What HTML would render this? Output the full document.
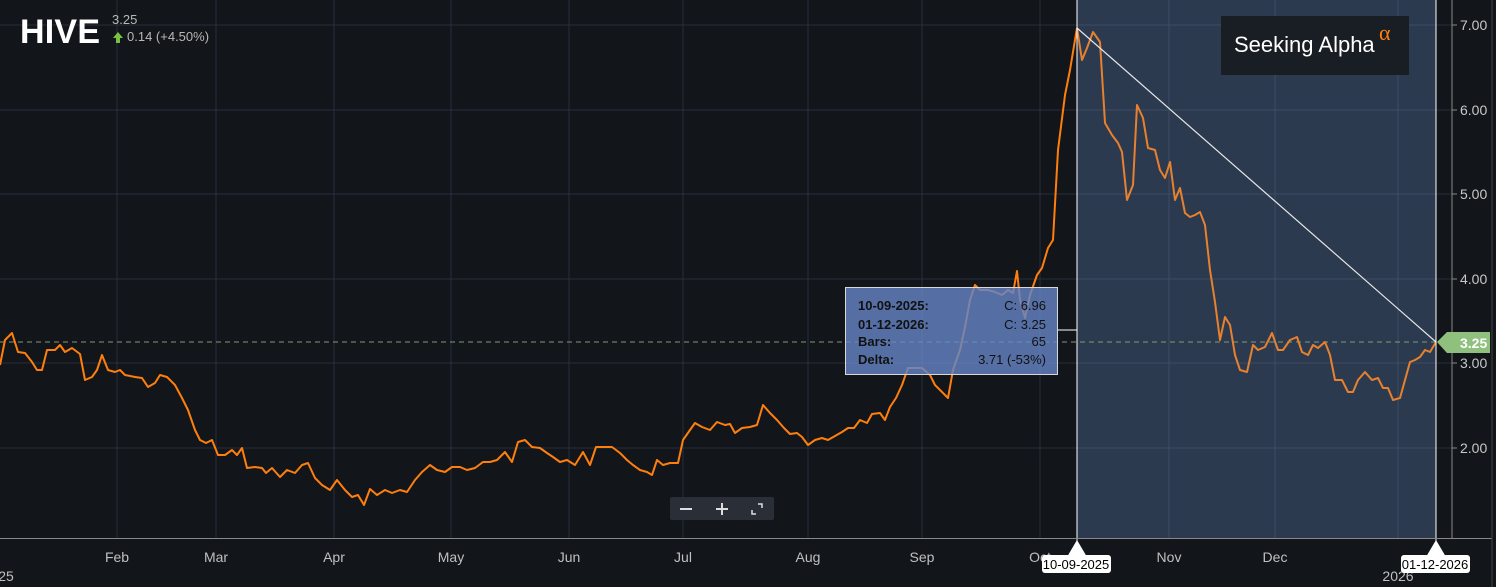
<!DOCTYPE html>
<html><head><meta charset="utf-8"><style>
body{margin:0;background:#121519;width:1496px;height:587px;overflow:hidden;font-family:"Liberation Sans",sans-serif}
</style></head><body>
<svg width="1496" height="587" style="position:absolute;left:0;top:0" font-family="Liberation Sans, sans-serif">
<rect width="1496" height="587" fill="#121519"/>
<rect x="1077" y="0" width="359" height="538" fill="#2c3a4f"/>
<g stroke="#25303d" stroke-width="1">
<line x1="0" y1="25" x2="1452" y2="25"/><line x1="0" y1="110" x2="1452" y2="110"/><line x1="0" y1="194" x2="1452" y2="194"/><line x1="0" y1="279" x2="1452" y2="279"/><line x1="0" y1="363" x2="1452" y2="363"/><line x1="0" y1="448" x2="1452" y2="448"/>
<line x1="117" y1="0" x2="117" y2="538"/><line x1="216" y1="0" x2="216" y2="538"/><line x1="334" y1="0" x2="334" y2="538"/><line x1="451" y1="0" x2="451" y2="538"/><line x1="569" y1="0" x2="569" y2="538"/><line x1="683" y1="0" x2="683" y2="538"/><line x1="808" y1="0" x2="808" y2="538"/><line x1="922" y1="0" x2="922" y2="538"/><line x1="1040" y1="0" x2="1040" y2="538"/>
</g>
<g stroke="#3b4c66"><line x1="1169" y1="0" x2="1169" y2="538"/><line x1="1275" y1="0" x2="1275" y2="538"/><line x1="1398" y1="0" x2="1398" y2="538"/><line x1="1077" y1="25" x2="1436" y2="25"/><line x1="1077" y1="110" x2="1436" y2="110"/><line x1="1077" y1="194" x2="1436" y2="194"/><line x1="1077" y1="279" x2="1436" y2="279"/><line x1="1077" y1="363" x2="1436" y2="363"/><line x1="1077" y1="448" x2="1436" y2="448"/></g>
<line x1="0" y1="342" x2="1440" y2="342" stroke="#7d9a78" stroke-dasharray="5,4"/>
<polyline fill="none" stroke="#ff7f0e" stroke-width="2" stroke-linejoin="round" points="0,365 5,340 12,333 18,352 25,353 32,362 37,370 42,370 47,350 55,350 60,345 65,352 72,348 80,354 85,380 92,377 97,370 102,355 108,370 115,372 120,370 125,375 135,377 142,378 148,387 155,383 160,375 167,377 175,385 182,398 188,410 195,430 200,440 206,443 212,440 218,455 225,455 232,450 237,455 242,448 247,468 255,467 262,468 266,473 272,468 280,477 287,470 295,473 302,465 308,463 315,478 322,485 330,490 337,480 345,490 352,497 358,495 364,505 370,489 377,495 385,490 392,493 400,490 407,492 415,480 422,472 430,465 437,470 445,472 452,467 460,467 467,470 475,468 483,462 490,462 497,460 505,452 512,462 518,442 525,440 532,447 540,448 547,453 553,457 560,462 567,460 575,465 583,452 590,465 596,447 603,447 612,447 620,453 627,460 633,465 640,470 647,472 652,475 657,460 663,465 670,463 678,463 683,440 690,430 695,423 702,427 710,430 717,422 725,425 730,424 735,433 742,428 750,427 757,425 763,405 770,413 777,420 784,428 790,434 797,433 802,437 808,445 815,440 822,438 828,440 835,436 842,432 848,428 854,428 860,420 867,423 872,414 880,413 885,420 890,407 896,398 902,385 908,368 915,368 922,368 930,375 935,385 942,392 948,398 953,370 960,350 965,327 970,300 975,285 980,290 988,290 995,292 1002,295 1008,290 1013,293 1017,271 1020,300 1025,318 1030,295 1037,275 1042,268 1048,248 1053,240 1058,150 1065,95 1070,70 1077,28"/>
<polyline fill="none" stroke="#e8812e" stroke-width="2" stroke-linejoin="round" points="1077,28 1082,60 1087,48 1093,32 1100,42 1105,123 1112,135 1118,143 1122,152 1127,200 1133,185 1137,105 1143,118 1148,148 1155,150 1160,170 1165,178 1170,162 1175,200 1180,188 1185,213 1190,217 1195,215 1200,212 1205,225 1210,270 1215,302 1220,340 1225,317 1230,325 1235,355 1240,370 1247,372 1253,345 1258,350 1265,347 1272,333 1278,350 1283,350 1290,340 1297,337 1302,352 1308,355 1313,345 1318,348 1325,342 1330,355 1335,380 1342,380 1348,392 1353,392 1358,380 1365,372 1372,380 1378,378 1383,388 1388,388 1393,400 1400,398 1405,380 1410,362 1415,360 1420,357 1425,350 1430,352 1436,342"/>
<line x1="1077" y1="28" x2="1436" y2="342" stroke="#e6e6e6" stroke-width="1.2"/>
<line x1="1077" y1="0" x2="1077" y2="545" stroke="#fff"/>
<line x1="1436" y1="0" x2="1436" y2="545" stroke="#fff"/>
<line x1="1058" y1="330" x2="1077" y2="330" stroke="#fff"/>
<rect x="845.5" y="287.5" width="212" height="87" fill="#6484c4" fill-opacity="0.82" stroke="#d8d8d8"/>
<g font-size="13" fill="#111"><g font-weight="bold"><text x="858" y="310">10-09-2025:</text><text x="858" y="329">01-12-2026:</text><text x="858" y="346">Bars:</text><text x="858" y="364">Delta:</text></g>
<g text-anchor="end"><text x="1046" y="310">C: 6.96</text><text x="1046" y="329">C: 3.25</text><text x="1046" y="346">65</text><text x="1046" y="364">3.71 (-53%)</text></g></g>
<line x1="1452" y1="0" x2="1452" y2="538" stroke="#888"/>
<line x1="0" y1="538.5" x2="1492" y2="538.5" stroke="#888"/>
<line x1="1492" y1="0" x2="1492" y2="587" stroke="#444"/>
<g fill="#c8c8c8" font-size="14"><text x="1460" y="30">7.00</text><text x="1460" y="115">6.00</text><text x="1460" y="199">5.00</text><text x="1460" y="284">4.00</text><text x="1460" y="368">3.00</text><text x="1460" y="453">2.00</text></g>
<g stroke="#888"><line x1="1452" y1="25" x2="1457" y2="25"/><line x1="1452" y1="110" x2="1457" y2="110"/><line x1="1452" y1="194" x2="1457" y2="194"/><line x1="1452" y1="279" x2="1457" y2="279"/><line x1="1452" y1="363" x2="1457" y2="363"/><line x1="1452" y1="448" x2="1457" y2="448"/></g>
<path d="M1437,342 L1447,332 H1490 V353 H1447 Z" fill="#8fc07e"/>
<text x="1460" y="348" fill="#fff" font-size="14" font-weight="bold">3.25</text>
<g fill="#c0c0c0" font-size="14" text-anchor="middle"><text x="117" y="562">Feb</text><text x="216" y="562">Mar</text><text x="334" y="562">Apr</text><text x="451" y="562">May</text><text x="569" y="562">Jun</text><text x="683" y="562">Jul</text><text x="808" y="562">Aug</text><text x="922" y="562">Sep</text><text x="1040" y="562">Oct</text><text x="1169" y="562">Nov</text><text x="1275" y="562">Dec</text><text x="1398" y="581">2026</text><text x="6" y="581">25</text></g>
<path d="M1077,540 L1087,557 H1067 Z M1436,540 L1446,557 H1426 Z" fill="#fff"/>
<rect x="1042" y="555" width="69" height="18" rx="3" fill="#fff"/><text x="1076" y="569" font-size="13" fill="#000" text-anchor="middle">10-09-2025</text>
<rect x="1401" y="555" width="69" height="18" rx="3" fill="#fff"/><text x="1435" y="569" font-size="13" fill="#000" text-anchor="middle">01-12-2026</text>
<rect x="1221" y="16" width="188" height="59" fill="#191d24"/>
<text x="1234" y="52" fill="#fff" font-size="22">Seeking Alpha</text>
<text x="1379" y="40" fill="#ff7f0e" font-size="22" font-family="Liberation Serif, serif">α</text>
<rect x="670" y="497" width="104" height="23" rx="2" fill="#2a2e36"/>
<g stroke="#ddd" stroke-width="2"><line x1="680" y1="509" x2="692" y2="509"/><line x1="716" y1="509" x2="728" y2="509"/><line x1="722" y1="503" x2="722" y2="515"/></g>
<path d="M752,510 v4 h4 M758,504 h4 v4" stroke="#ddd" stroke-width="1.5" fill="none"/>
<text x="20" y="43" fill="#fff" font-size="34" font-weight="bold" textLength="80">HIVE</text>
<text x="112" y="24" fill="#b8b8b8" font-size="13">3.25</text>
<path d="M113,38 L118,32 L123,38 H120 V43 H116 V38 Z" fill="#7ac143"/>
<text x="127" y="41" fill="#b8b8b8" font-size="13">0.14 (+4.50%)</text>
</svg>
</body></html>
